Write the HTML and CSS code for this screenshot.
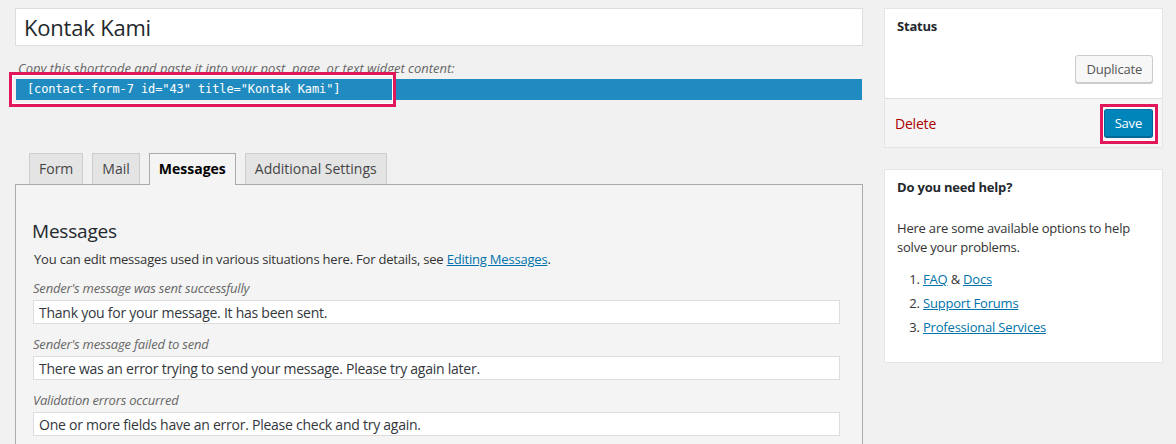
FILE: index.html
```html
<!DOCTYPE html>
<html lang="en">
<head>
  <meta charset="UTF-8">
  <title>Edit Contact Form</title>
  <link rel="stylesheet" href="styles.css">
</head>
<body>
  <div class="wrap">
    <div class="main">
      <input type="text" class="title-input" value="Kontak Kami">

      <p class="hint">Copy this shortcode and paste it into your post, page, or text widget content:</p>
      <div class="shortcode">
        <span class="code">[contact-form-7 id="43" title="Kontak Kami"]</span>
        <span class="mark mark-code"></span>
      </div>

      <ul class="tabs">
        <li class="tab">Form</li>
        <li class="tab">Mail</li>
        <li class="tab active">Messages</li>
        <li class="tab">Additional Settings</li>
      </ul>

      <div class="panel">
        <h2>Messages</h2>
        <p class="desc">You can edit messages used in various situations here. For details, see <a href="#">Editing Messages</a>.</p>

        <label class="field">
          <span class="field-label">Sender's message was sent successfully</span>
          <input type="text" value="Thank you for your message. It has been sent.">
        </label>
        <label class="field">
          <span class="field-label">Sender's message failed to send</span>
          <input type="text" value="There was an error trying to send your message. Please try again later.">
        </label>
        <label class="field">
          <span class="field-label">Validation errors occurred</span>
          <input type="text" value="One or more fields have an error. Please check and try again.">
        </label>
      </div>
    </div>

    <div class="side">
      <div class="box">
        <h3>Status</h3>
        <div class="box-actions">
          <button class="btn">Duplicate</button>
        </div>
        <div class="box-foot">
          <a href="#" class="delete">Delete</a>
          <span class="save-wrap">
            <button class="btn btn-primary">Save</button>
            <span class="mark mark-save"></span>
          </span>
        </div>
      </div>

      <div class="box help">
        <h3>Do you need help?</h3>
        <p>Here are some available options to help solve your problems.</p>
        <ol>
          <li><a href="#">FAQ</a> &amp; <a href="#">Docs</a></li>
          <li><a href="#">Support Forums</a></li>
          <li><a href="#">Professional Services</a></li>
        </ol>
      </div>
    </div>
  </div>
</body>
</html>
```

FILE: styles.css
```css
body {
  margin: 0;
  background: #f1f1f1;
  color: #333;
  font-family: "Open Sans", sans-serif;
  font-size: 13px;
  letter-spacing: -0.2px;
  overflow: hidden;
}
.wrap { display: flex; gap: 21px; padding: 8px 0 0 15px; }
.main { width: 848px; }
.side { width: 279px; }

.title-input {
  display: block;
  box-sizing: border-box;
  width: 100%;
  height: 38px;
  padding: 0 8px;
  border: 1px solid #ddd;
  background: #fff;
  font-family: inherit;
  font-size: 22px;
  letter-spacing: -0.2px;
  color: #23282d;
  outline: none;
}
.hint { margin: 13px 0 2px 3px; font-style: italic; color: #666; font-size: 13px; letter-spacing: 0; }
.shortcode {
  position: relative;
  height: 21px;
  background: #208bc0;
  margin-left: 1px;
  margin-right: 1px;
}
.code {
  display: block;
  padding-left: 11px;
  line-height: 21px;
  font-family: "DejaVu Sans Mono", monospace;
  font-size: 12px;
  letter-spacing: -0.1px;
  color: #fff;
}
.mark { position: absolute; border: 3px solid #e0185a; box-shadow: inset 0 0 0 1px #fff; }
.mark-code { left: -7px; top: -7px; width: 381px; height: 29px; }

.tabs { display: flex; gap: 9px; margin: 53px 0 0; padding: 0 0 0 14px; list-style: none; }
.tab {
  height: 30px;
  line-height: 30px;
  padding: 0 9px;
  border: 1px solid #ccc;
  border-bottom: none;
  background: #e4e4e4;
  color: #444;
  font-size: 14px;
  letter-spacing: 0;
}
.tab.active {
  background: #f4f4f4;
  border-color: #aaa;
  color: #000;
  font-weight: bold;
  height: 31px;
  margin-bottom: -1px;
  position: relative;
}
.panel {
  background: #f4f4f4;
  border: 1px solid #aaa;
  padding: 33px 23px 20px 16px;
  height: 400px;
}
.panel h2 { margin: 0 0 6px; font-size: 19px; font-weight: normal; color: #23282d; }
.desc { margin: 0 0 11px 2px; }
.desc a, .help a { color: #0073aa; }
.field { display: block; margin-bottom: 11px; }
.field-label { display: block; font-style: italic; color: #666; margin-left: 1px; margin-bottom: 3px; }
.field input {
  display: block;
  box-sizing: border-box;
  width: 100%;
  height: 24px;
  margin-left: 1px;
  padding: 0 5px;
  border: 1px solid #ddd;
  background: #fff;
  font-family: inherit;
  font-size: 14px;
  letter-spacing: -0.25px;
  color: #32373c;
}

.box { background: #fff; border: 1px solid #e5e5e5; margin-bottom: 21px; }
.box h3 { margin: 0; padding: 8px 12px 0; font-size: 13px; font-weight: bold; color: #23282d; }
.box-actions { display: flex; justify-content: flex-end; padding: 20px 9px 15px; }
.btn {
  height: 28px;
  padding: 0 10px;
  border: 1px solid #ccc;
  border-radius: 3px;
  background: #f7f7f7;
  box-shadow: 0 1px 0 #ccc;
  font-family: inherit;
  font-size: 13px;
  letter-spacing: -0.2px;
  color: #555;
}
.box-foot {
  display: flex;
  justify-content: space-between;
  align-items: center;
  height: 48px;
  padding: 0 9px 0 10px;
  border-top: 1px solid #ddd;
  background: #f5f5f5;
}
.delete { color: #a00; text-decoration: none; font-size: 14px; }
.save-wrap { position: relative; display: inline-block; }
.btn-primary {
  background: #0085ba;
  border-color: #0073aa #006799 #006799;
  box-shadow: 0 1px 0 #006799;
  color: #fff;
}
.mark-save { left: -4px; top: -5px; width: 52px; height: 34px; }

.help { padding-bottom: 20px; }
.help h3 { padding-top: 8px; }
.help p { margin: 0; padding: 23px 12px 0; font-size: 13px; line-height: 19px; }
.help ol { margin: 13px 0 0; padding: 0 12px 0 38px; }
.help li { line-height: 19px; margin-bottom: 5px; }
```
